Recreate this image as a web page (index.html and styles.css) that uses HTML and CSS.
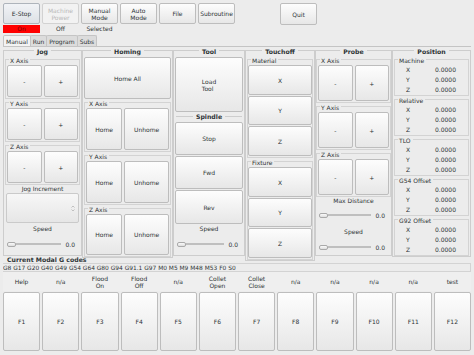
FILE: index.html
```html
<!DOCTYPE html>
<html>
<head>
<meta charset="utf-8">
<link rel="stylesheet" href="styles.css">
</head>
<body>
<div class="app">
  <div class="toolbar">
    <div class="btn tb estop">E-Stop</div>
    <div class="btn tb disabled">Machine<br>Power</div>
    <div class="btn tb">Manual<br>Mode</div>
    <div class="btn tb">Auto<br>Mode</div>
    <div class="btn tb">File</div>
    <div class="btn tb">Subroutine</div>
    <div class="btn tb quit">Quit</div>
  </div>
  <div class="status">
    <div class="scell on">On</div>
    <div class="scell">Off</div>
    <div class="scell">Selected</div>
  </div>
  <div class="tabs">
    <div class="tab active">Manual</div>
    <div class="tab">Run</div>
    <div class="tab">Program</div>
    <div class="tab">Subs</div>
  </div>

  <div class="page">
    <!-- Jog -->
    <div class="col c-jog">
      <div class="ft">Jog</div>
      <div class="cb">
        <div class="sub"><div class="st">X Axis</div><div class="sb"><div class="row h32"><div class="btn f1">-</div><div class="btn f1">+</div></div></div></div>
        <div class="sub"><div class="st">Y Axis</div><div class="sb"><div class="row h32"><div class="btn f1">-</div><div class="btn f1">+</div></div></div></div>
        <div class="sub"><div class="st">Z Axis</div><div class="sb"><div class="row h32"><div class="btn f1">-</div><div class="btn f1">+</div></div></div></div>
        <div class="lbl">Jog Increment</div>
        <div class="combo"><svg class="arr" width="4" height="7" viewBox="0 0 4 7"><path d="M0.5 2.5 L2 1 L3.5 2.5 M0.5 4.5 L2 6 L3.5 4.5" fill="none" stroke="#b4b4b4" stroke-width="0.8"/></svg></div>
        <div class="lbl mt2">Speed</div>
        <div class="slider mt6"><div class="knob"></div><div class="track"></div><div class="val">0.0</div></div>
      </div>
    </div>

    <!-- Homing -->
    <div class="col c-home">
      <div class="ft">Homing</div>
      <div class="cb">
        <div class="btn homeall">Home All</div>
        <div class="sub"><div class="st">X Axis</div><div class="sb"><div class="row h42"><div class="btn fh">Home</div><div class="btn fu">Unhome</div></div></div></div>
        <div class="sub"><div class="st">Y Axis</div><div class="sb"><div class="row h42"><div class="btn fh">Home</div><div class="btn fu">Unhome</div></div></div></div>
        <div class="sub"><div class="st">Z Axis</div><div class="sb"><div class="row h41"><div class="btn fh">Home</div><div class="btn fu">Unhome</div></div></div></div>
      </div>
    </div>

    <!-- Tool -->
    <div class="col c-tool">
      <div class="ft">Tool</div>
      <div class="cb">
        <div class="btn loadtool"><span class="lt">Load<br>Tool</span></div>
        <div class="ft inner">Spindle</div>
        <div class="btn sp h33">Stop</div>
        <div class="btn sp h33">Fwd</div>
        <div class="btn sp h34">Rev</div>
        <div class="lbl mt1">Speed</div>
        <div class="slider mt6"><div class="knob"></div><div class="track"></div><div class="val">0.0</div></div>
      </div>
    </div>

    <!-- Touchoff -->
    <div class="col c-touch">
      <div class="ft">Touchoff</div>
      <div class="cb">
        <div class="sub"><div class="st">Material</div><div class="sb">
          <div class="btn h30">X</div><div class="btn h29 mt1">Y</div><div class="btn h30 mt1">Z</div>
        </div></div>
        <div class="sub"><div class="st">Fixture</div><div class="sb">
          <div class="btn h30">X</div><div class="btn h29 mt1">Y</div><div class="btn h30 mt1">Z</div>
        </div></div>
      </div>
    </div>

    <!-- Probe -->
    <div class="col c-probe">
      <div class="ft">Probe</div>
      <div class="cb">
        <div class="sub"><div class="st">X Axis</div><div class="sb"><div class="row h36"><div class="btn f1">-</div><div class="btn f1">+</div></div></div></div>
        <div class="sub"><div class="st">Y Axis</div><div class="sb"><div class="row h36"><div class="btn f1">-</div><div class="btn f1">+</div></div></div></div>
        <div class="sub"><div class="st">Z Axis</div><div class="sb"><div class="row h36"><div class="btn f1">-</div><div class="btn f1">+</div></div></div></div>
        <div class="lbl">Max Distance</div>
        <div class="slider mt5"><div class="knob"></div><div class="track"></div><div class="val">0.0</div></div>
        <div class="lbl mt8">Speed</div>
        <div class="slider mt6"><div class="knob"></div><div class="track"></div><div class="val">0.0</div></div>
      </div>
    </div>

    <!-- Position -->
    <div class="col c-pos">
      <div class="ft">Position</div>
      <div class="cb">
        <div class="sub"><div class="st">Machine</div><div class="sb pos">
          <div class="prow"><span>X</span><span>0.0000</span></div>
          <div class="prow"><span>Y</span><span>0.0000</span></div>
          <div class="prow"><span>Z</span><span>0.0000</span></div>
        </div></div>
        <div class="sub"><div class="st">Relative</div><div class="sb pos">
          <div class="prow"><span>X</span><span>0.0000</span></div>
          <div class="prow"><span>Y</span><span>0.0000</span></div>
          <div class="prow"><span>Z</span><span>0.0000</span></div>
        </div></div>
        <div class="sub"><div class="st">TLO</div><div class="sb pos">
          <div class="prow"><span>X</span><span>0.0000</span></div>
          <div class="prow"><span>Y</span><span>0.0000</span></div>
          <div class="prow"><span>Z</span><span>0.0000</span></div>
        </div></div>
        <div class="sub"><div class="st">G54 Offset</div><div class="sb pos">
          <div class="prow"><span>X</span><span>0.0000</span></div>
          <div class="prow"><span>Y</span><span>0.0000</span></div>
          <div class="prow"><span>Z</span><span>0.0000</span></div>
        </div></div>
        <div class="sub"><div class="st">G92 Offset</div><div class="sb pos">
          <div class="prow"><span>X</span><span>0.0000</span></div>
          <div class="prow"><span>Y</span><span>0.0000</span></div>
          <div class="prow"><span>Z</span><span>0.0000</span></div>
        </div></div>
      </div>
    </div>
  </div>

  <div class="mtitle">Current Modal G codes</div>
  <div class="codes">G8 G17 G20 G40 G49 G54 G64 G80 G94 G91.1 G97 M0 M5 M9 M48 M53 F0 S0</div>

  <div class="flabels">
    <div>Help</div><div>n/a</div><div>Flood<br>On</div><div>Flood<br>Off</div><div>n/a</div><div>Collet<br>Open</div>
    <div>Collet<br>Close</div><div>n/a</div><div>n/a</div><div>n/a</div><div>n/a</div><div>test</div>
  </div>
  <div class="fkeys">
    <div class="btn">F1</div><div class="btn">F2</div><div class="btn">F3</div><div class="btn">F4</div>
    <div class="btn">F5</div><div class="btn">F6</div><div class="btn">F7</div><div class="btn">F8</div>
    <div class="btn">F9</div><div class="btn">F10</div><div class="btn">F11</div><div class="btn">F12</div>
  </div>
</div>
</body>
</html>
```
FILE: styles.css
```css
* { box-sizing: border-box; }
body {
  margin: 0;
  background: #ececec;
  font-family: "DejaVu Sans", sans-serif;
  font-size: 6px;
  line-height: 7px;
  color: #2e3436;
}
.app { width: 474px; height: 355px; padding: 3px 3px 0; }

.btn {
  display: flex;
  align-items: center;
  justify-content: center;
  text-align: center;
  border: 1px solid #bdbdbd;
  border-radius: 2px;
  background: linear-gradient(#fdfdfd, #e7e7e7);
  color: #2e3436;
}

/* toolbar */
.toolbar { display: flex; gap: 2px; height: 21px; }
.tb { width: 37px; }
.estop { background: linear-gradient(#f1f3f6, #dde1e6); border-color: #aeb4bb; }
.disabled { color: #b9b9b9; background: #f2f2f2; border-color: #d2d2d2; }
.quit { margin-left: 43px; height: 22px; }

.status { display: flex; gap: 2px; height: 8px; margin-top: 1px; }
.scell { width: 37px; text-align: center; line-height: 8px; }
.scell.on { background: #ff0000; color: #7a0000; }

/* tabs */
.tabs { display: flex; height: 11px; margin-top: 2px; }
.tab {
  display: flex;
  align-items: center;
  padding: 0 2px;
  border: 1px solid #c4c4c4;
  border-bottom: none;
  border-radius: 2px 2px 0 0;
  background: #dcdcdc;
  margin-right: -1px;
}
.tab.active { background: #f3f3f3; }

/* page */
.page { display: flex; border-top: 1px solid #c4c4c4; height: 210px; }
.col { display: flex; flex-direction: column; }
.c-jog { width: 79px; }
.c-home { width: 91px; }
.c-tool { width: 72px; }
.c-touch { width: 70px; }
.c-probe { width: 77px; }
.c-pos { width: 79px; }

.ft {
  height: 9px;
  flex: none;
  display: flex;
  align-items: center;
  font-weight: bold;
  font-size: 6.2px;
}
.ft::before, .ft::after {
  content: "";
  flex: 1;
  align-self: flex-end;
  height: 5px;
  border-top: 1px solid #cdcdcd;
}
.ft::before { border-left: 1px solid #cdcdcd; margin-right: 3px; }
.ft::after { border-right: 1px solid #cdcdcd; margin-left: 3px; }
.ft.inner::before, .ft.inner::after { border-left: none; border-right: none; height: 4px; }
.ft.inner { margin: 0 2px; }

.cb {
  flex: 1;
  display: flex;
  flex-direction: column;
  border: 1px solid #cdcdcd;
  border-top: none;
}

.sub { margin: 0 1px; display: flex; flex-direction: column; flex: none; }
.st { height: 8px; display: flex; align-items: center; }
.st::before, .st::after {
  content: "";
  align-self: flex-end;
  height: 4px;
  border-top: 1px solid #d3d3d3;
}
.st::before { width: 3px; border-left: 1px solid #d3d3d3; margin-right: 1px; }
.st::after { flex: 1; border-right: 1px solid #d3d3d3; margin-left: 2px; }
.sb { border: 1px solid #d3d3d3; border-top: none; padding: 1px; }

.row { display: flex; gap: 2px; }
.f1 { flex: 1; }
.fh { flex: 37; }
.fu { flex: 46; }
.h29 { height: 29px; }
.h30 { height: 30px; }
.h32 { height: 32px; }
.h33 { height: 33px; }
.h34 { height: 34px; }
.h36 { height: 36px; }
.h41 { height: 41px; }
.h42 { height: 42px; }
.mt1 { margin-top: 1px; }
.mt2 { margin-top: 2px; }
.mt5 { margin-top: 5px; }
.mt6 { margin-top: 6px; }
.mt8 { margin-top: 8px; }

.homeall { height: 42px; margin: 1px 1px 0; flex: none; }
.loadtool { height: 55px; margin: 1px 1px 0; flex: none; }
.lt { text-align: left; }
.sp { margin: 1px 1px 0; flex: none; }

.c-touch .sb { padding: 1px 0; }
.c-probe .sub { margin: 0; }

.lbl { height: 8px; text-align: center; line-height: 8px; flex: none; }
.combo {
  height: 30px;
  margin: 0 2px;
  flex: none;
  border: 1px solid #cacaca;
  border-radius: 2px;
  background: linear-gradient(#f7f7f7, #e6e6e6);
  display: flex;
  align-items: center;
  justify-content: flex-end;
  padding-right: 3px;
}
.arr { display: block; }

.slider { height: 10px; display: flex; align-items: center; padding: 0 6px 0 3px; flex: none; }
.knob {
  width: 9px;
  height: 5px;
  border: 1px solid #a9a9a9;
  border-radius: 2px;
  background: linear-gradient(#fafafa, #dedede);
  flex: none;
}
.track { flex: 1; height: 2px; background: #bfbfbf; }
.val { margin-left: 4px; }

.pos { padding: 0 0 1px; }
.prow { height: 10px; display: flex; align-items: center; justify-content: space-between; padding: 0 12px 0 11px; }

/* bottom */
.mtitle { height: 7px; line-height: 7px; font-weight: bold; font-size: 6.2px; padding-left: 4px; }
.codes {
  height: 9px;
  line-height: 8px;
  border: 1px solid #d3d3d3;
  border-left: none;
  white-space: nowrap;
  overflow: hidden;
  font-size: 5.9px;
}
.flabels {
  display: grid;
  grid-template-columns: repeat(12, 1fr);
  gap: 2px;
  height: 19px;
  background: #efefef;
}
.flabels div { display: flex; align-items: center; justify-content: center; text-align: center; }
.fkeys {
  display: grid;
  grid-template-columns: repeat(12, 1fr);
  gap: 2px;
  height: 59px;
  margin-top: 1px;
}
```
